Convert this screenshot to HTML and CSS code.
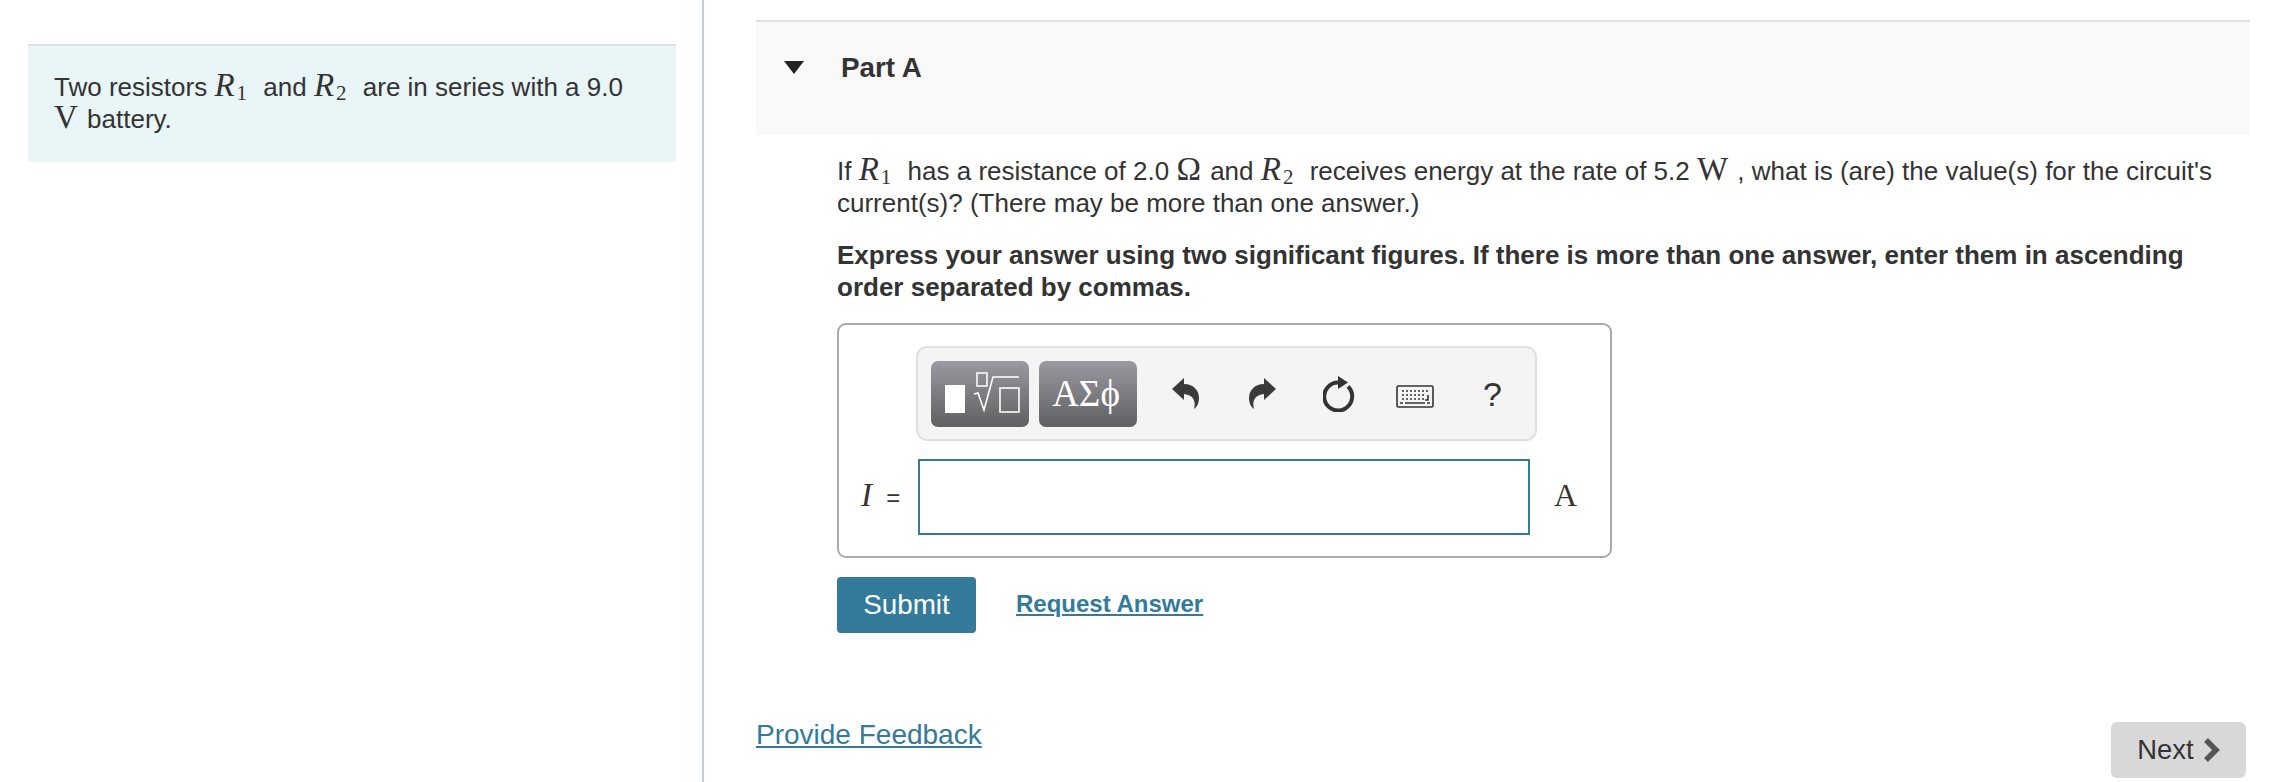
FILE: index.html
```html
<!DOCTYPE html>
<html lang="en">
<head>
    <meta charset="UTF-8">
    <meta name="viewport" content="width=device-width, initial-scale=1.0">
    <title>Part A</title>
    <link rel="stylesheet" href="styles.css">
</head>
<body>
    <aside class="sidebar">
        <div class="intro">
            Two resistors <span class="math"><i>R</i><sub>1</sub></span> and <span class="math"><i>R</i><sub>2</sub></span> are in series with a 9.0 <span class="unit">V</span> battery.
        </div>
    </aside>
    <main class="main">
        <div class="part-header">
            <span class="caret"></span>
            <h2 class="part-title">Part A</h2>
        </div>
        <div class="part-body">
            <p class="question">If <span class="math"><i>R</i><sub>1</sub></span> has a resistance of 2.0 <span class="unit">Ω</span> and <span class="math"><i>R</i><sub>2</sub></span> receives energy at the rate of 5.2 <span class="unit">W</span> , what is (are) the value(s) for the circuit's current(s)? (There may be more than one answer.)</p>
            <p class="question instructions">Express your answer using two significant figures. If there is more than one answer, enter them in ascending order separated by commas.</p>
            <div class="answer-box">
                <div class="toolbar">
                    <button class="math-btn" type="button">
                        <svg width="98" height="66" viewBox="0 0 98 66">
                            <rect x="14" y="24" width="20" height="28" fill="#fff"/>
                            <rect x="46" y="12" width="10" height="13" fill="none" stroke="#fff" stroke-width="1.5"/>
                            <path d="M43 33 L47 32 L53 49 L62 16 H88" fill="none" stroke="#fff" stroke-width="1.6"/>
                            <rect x="69" y="27" width="19" height="24" fill="none" stroke="#fff" stroke-width="1.6"/>
                        </svg>
                    </button>
                    <button class="math-btn symbols" type="button">ΑΣϕ</button>
                    <svg class="tool undo" width="27" height="31" viewBox="0 0 27 31"><path d="M0 11 L12 0 V6 C22 6 27 13 27 20 C27 25 25 29 22 31 C24 24 22 17 12 16 V22 Z" fill="#3a3a3a"/></svg>
                    <svg class="tool redo" width="27" height="31" viewBox="0 0 27 31"><path d="M27 11 L15 0 V6 C5 6 0 13 0 20 C0 25 2 29 5 31 C3 24 5 17 15 16 V22 Z" fill="#3a3a3a"/></svg>
                    <svg class="tool reset" width="32" height="36" viewBox="0 0 32 36">
                        <path d="M25 10.5 A14 14 0 1 1 16 6.5" fill="none" stroke="#333" stroke-width="4"/>
                        <path d="M15 0 L25 6.5 L15 13 Z" fill="#333"/>
                    </svg>
                    <svg class="tool keyboard" width="38" height="23" viewBox="0 0 38 23">
                        <rect x="1" y="1" width="36" height="21" rx="1.5" fill="none" stroke="#333" stroke-width="1.6"/>
                        <path d="M6 6 H33 M6 10 H28 M6 14 H28" stroke="#333" stroke-width="1.6" stroke-dasharray="2 2" fill="none"/>
                        <path d="M32 10 V15 H29 M9 18 H29" stroke="#333" stroke-width="1.6" fill="none"/>
                        <path d="M4 18 H7 M31 18 H34" stroke="#333" stroke-width="1.6" fill="none"/>
                    </svg>
                    <span class="help">?</span>
                </div>
                <div class="answer-row">
                    <label class="answer-label" for="answer"><i>I</i> <span>=</span></label>
                    <input class="answer-input" id="answer" type="text">
                    <span class="answer-unit">A</span>
                </div>
            </div>
            <div class="actions">
                <button class="submit" type="button">Submit</button>
                <a class="request" href="#">Request Answer</a>
            </div>
        </div>
        <div class="page-footer">
            <a class="feedback" href="#">Provide Feedback</a>
            <button class="next" type="button">Next
                <svg width="17" height="26" viewBox="0 0 17 26"><path d="M3 3 L13 13 L3 23" fill="none" stroke="#555" stroke-width="5.5"/></svg>
            </button>
        </div>
    </main>
</body>
</html>
```

FILE: styles.css
```css
* {
    box-sizing: border-box;
}
html, body {
    height: 100%;
}
body {
    font-family: "Liberation Sans", Arial, sans-serif;
    font-size: 26px;
    line-height: 32px;
    color: #333;
    background-color: #fff;
    display: flex;
    height: 782px;
    margin: 0;
    overflow: hidden;
}
.sidebar {
    width: 704px;
    flex-shrink: 0;
    padding: 44px 26px 0 28px;
    border-right: 2px solid #c2d0dd;
}
.intro {
    height: 118px;
    padding: 25px 40px 0 26px;
    background-color: #e9f5f7;
    border-top: 2px solid #e0e0e0;
}
.math, .unit {
    font-family: "Liberation Serif", "Times New Roman", serif;
    font-size: 33px;
    line-height: 0;
}
.math {
    margin-right: 9px;
}
.math i {
    margin-right: 2px;
}
.unit {
    margin-right: 2px;
}
.math sub {
    font-size: 21px;
    line-height: 0;
    vertical-align: -4px;
}
.main {
    flex: 1;
    min-width: 0;
    padding: 20px 42px 0 52px;
}
.part-header {
    display: flex;
    height: 115px;
    padding: 30px 0 0 28px;
    background-color: #f9f9f9;
    border-top: 2px solid #e0e0e0;
}
.caret {
    width: 0;
    height: 0;
    margin-top: 9px;
    border-left: 10.5px solid transparent;
    border-right: 10.5px solid transparent;
    border-top: 13px solid #222;
}
.part-title {
    margin: 0 0 0 37px;
    font-size: 27.8px;
    line-height: 32px;
    font-weight: bold;
}
.part-body {
    padding: 0 20px 0 81px;
}
.question {
    margin: 0;
    padding-top: 20px;
}
.instructions {
    padding-top: 20px;
    font-weight: bold;
}
.answer-box {
    width: 775px;
    height: 235px;
    margin-top: 20px;
    padding: 21px 0 0 77px;
    border: 2px solid #aaa;
    border-radius: 9px;
}
.toolbar {
    display: flex;
    align-items: center;
    width: 621px;
    height: 95px;
    padding: 0 0 0 13px;
    background-color: #f4f4f4;
    border: 2px solid #e0e0e0;
    border-radius: 11px;
}
.math-btn {
    width: 98px;
    height: 66px;
    padding: 0;
    margin-right: 10px;
    border: none;
    border-radius: 7px;
    background: linear-gradient(#9b99a1, #606062);
    color: #fff;
    font-family: "Liberation Serif", serif;
    font-size: 37px;
}
.symbols {
    padding-right: 4px;
}
.math-btn svg {
    display: block;
}
.tool {
    flex-shrink: 0;
}
.undo {
    margin-left: 25px;
}
.redo {
    margin-left: 50px;
}
.reset {
    margin-left: 47px;
}
.keyboard {
    margin: 6px 0 0 41px;
}
.help {
    margin-left: 49px;
    font-size: 34px;
}
.answer-row {
    display: flex;
    align-items: center;
    height: 76px;
    margin: 18px 0 0 -77px;
    padding-left: 22px;
}
.answer-label {
    width: 57px;
    flex-shrink: 0;
    padding-bottom: 2px;
    font-family: "Liberation Serif", serif;
    font-size: 33px;
    white-space: nowrap;
}
.answer-label span {
    font-family: "Liberation Sans", sans-serif;
    font-size: 24px;
    margin-left: 6px;
}
.answer-input {
    width: 612px;
    height: 76px;
    border: 2px solid #337a9b;
    outline: none;
}
.answer-unit {
    margin-left: 24px;
    padding-bottom: 4px;
    font-family: "Liberation Serif", serif;
    font-size: 32px;
}
.actions {
    display: flex;
    align-items: center;
    margin-top: 19px;
}
.submit {
    width: 139px;
    height: 56px;
    padding: 0;
    border: none;
    border-radius: 4px;
    background-color: #337a9b;
    color: #fff;
    font-family: inherit;
    font-size: 27.8px;
}
.request {
    margin: -3px 0 0 40px;
    color: #337a9b;
    font-size: 24px;
    font-weight: bold;
}
.page-footer {
    display: flex;
    justify-content: space-between;
    align-items: flex-start;
    margin: 0 4px 0 0;
    padding-top: 89px;
}
.feedback {
    margin-top: -3px;
    color: #337a9b;
    font-size: 28px;
}
.next {
    display: flex;
    align-items: center;
    justify-content: center;
    gap: 9px;
    width: 135px;
    height: 56px;
    padding: 0;
    border: none;
    border-radius: 6px;
    background-color: #d8d8d8;
    color: #333;
    font-family: inherit;
    font-size: 27.4px;
}
```
